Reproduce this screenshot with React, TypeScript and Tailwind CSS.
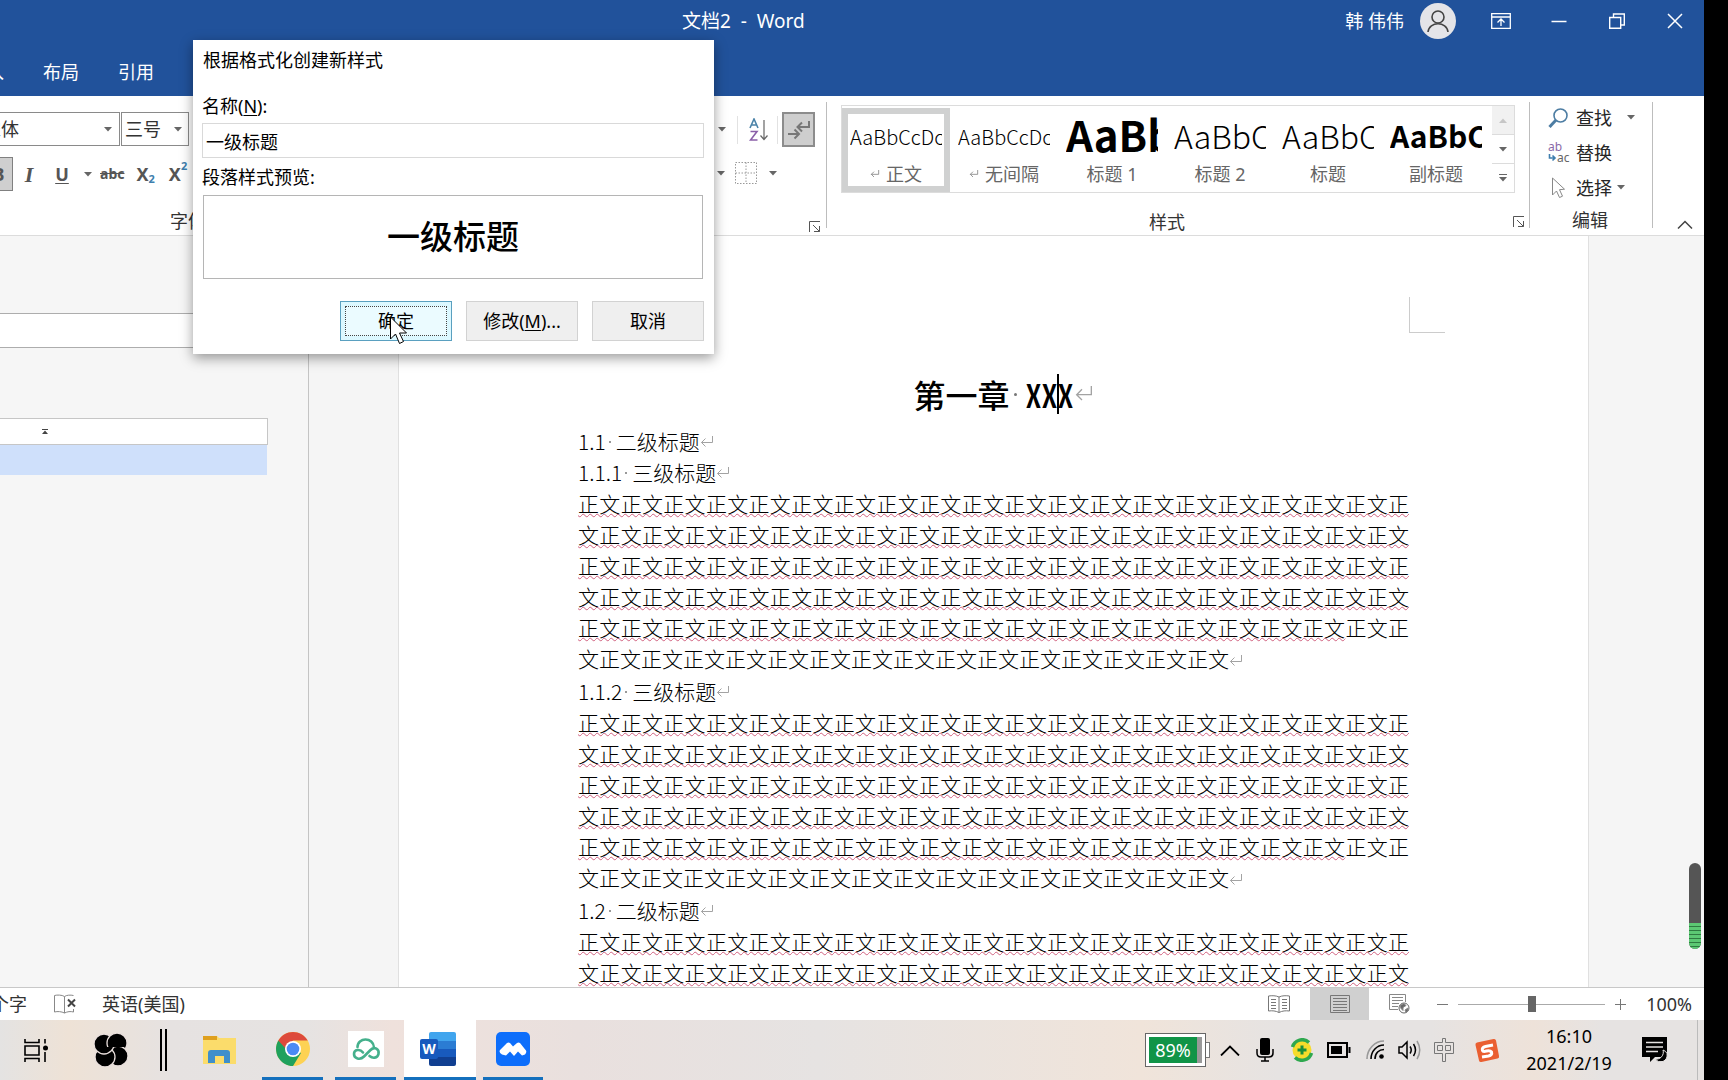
import { type ReactNode } from 'react';

type StyleItem = {
  name: string;
  sample: string;
  sampleClass: string;
  mark?: boolean;
};

const STYLE_ITEMS: StyleItem[] = [
  { name: '正文', sample: 'AaBbCcDc', sampleClass: 'pb-0.5 text-xl font-light', mark: true },
  { name: '无间隔', sample: 'AaBbCcDc', sampleClass: 'pb-0.5 text-xl font-light', mark: true },
  { name: '标题 1', sample: 'AaBb', sampleClass: 'pb-2.5 text-[42px] font-bold' },
  { name: '标题 2', sample: 'AaBbC', sampleClass: 'pb-1.5 text-[32px] font-light' },
  { name: '标题', sample: 'AaBbC', sampleClass: 'pb-1.5 text-[32px] font-light' },
  { name: '副标题', sample: 'AaBbC', sampleClass: 'pb-1.5 text-[30px] font-bold' },
];

const CHECKED_TEXT = '正文'.repeat(96);
const TAIL_TEXT = '正文'.repeat(17);

function Caret({ className = '' }: { className?: string }) {
  return (
    <svg viewBox="0 0 8 5" className={`h-[5px] w-2 shrink-0 fill-[#666] ${className}`}>
      <path d="M0 0h8L4 4.5z" />
    </svg>
  );
}

function ReturnMark({ className = 'h-3 w-3.5 stroke-[#a3a3a3]' }: { className?: string }) {
  return (
    <svg viewBox="0 0 14 12" className={`inline-block shrink-0 fill-none ${className}`}>
      <path d="M12.5 0v6.5H1.5M5.5 2.5l-4 4 4 4" />
    </svg>
  );
}

function Launcher({ label }: { label: string }) {
  return (
    <button type="button" aria-label={label}>
      <svg viewBox="0 0 12 12" className="block h-3 w-3 fill-none stroke-[#555]">
        <path d="M.5 11V.5H11M4 4l6.5 6.5M10.500 5v5.500H5" />
      </svg>
    </button>
  );
}

function WindowHeader() {
  return (
    <header className="h-24 shrink-0 overflow-hidden bg-[#21529b] text-white">
      <div className="flex h-[42px] items-center">
        <h1 className="ml-[682px] flex-1 text-[19px]">文档2&nbsp; -&nbsp; Word</h1>
        <span className="mr-4 text-lg">韩 伟伟</span>
        <svg viewBox="0 0 36 36" className="mr-[35px] h-9 w-9 fill-none stroke-[#444]" strokeWidth="1.600">
          <circle cx="18" cy="18" r="18" fill="#e4e4e8" stroke="none" />
          <circle cx="18" cy="14" r="6" />
          <path d="M8 29c1-11 19-11 20 0" />
        </svg>
        <button type="button" aria-label="功能区显示选项" className="mr-10">
          <svg viewBox="0 0 20 16" className="h-4 w-5 fill-none stroke-white" strokeWidth="1.300">
            <path d="M.7.7h18.600v14.600H.7zM.7 4h18.600M10 13V6.500M6.500 9.500L10 6l3.500 3.500" />
          </svg>
        </button>
        <button type="button" aria-label="最小化" className="mr-[42px]">
          <svg viewBox="0 0 16 16" className="h-4 w-4 stroke-white" strokeWidth="1.500">
            <path d="M.5 8.500h15" />
          </svg>
        </button>
        <button type="button" aria-label="还原" className="mr-[42px]">
          <svg viewBox="0 0 16 16" className="h-4 w-4 fill-none stroke-white" strokeWidth="1.400">
            <path d="M.7 4.500h11v10.800H.7zM4.500 4.500V1h10.800v11h-3.600" />
          </svg>
        </button>
        <button type="button" aria-label="关闭" className="mr-[21px]">
          <svg viewBox="0 0 16 16" className="h-4 w-4 stroke-white" strokeWidth="1.500">
            <path d="M1 1l14 14M15 1L1 15" />
          </svg>
        </button>
      </div>
      <nav className="-ml-8 flex h-[60px] items-center gap-[39px] text-lg">
        <button type="button">插入</button>
        <button type="button">布局</button>
        <button type="button">引用</button>
      </nav>
    </header>
  );
}

function FontGroup() {
  return (
    <section aria-label="字体" className="relative flex w-[212px] shrink-0 flex-col overflow-hidden pt-4">
      <div className="flex items-center gap-px">
        <div className="-ml-5 flex items-center border border-[#8a8a8a]">
          <select aria-label="字体" className="h-8 w-[123px] appearance-none pl-0.5 text-lg text-[#333]">
            <option>宋体</option>
          </select>
          <Caret className="mr-[7px]" />
        </div>
        <div className="flex items-center border border-[#8a8a8a]">
          <select aria-label="字号" className="h-8 w-12 appearance-none pl-[3px] text-lg text-[#333]">
            <option>三号</option>
          </select>
          <Caret className="mr-1.5 ml-1" />
        </div>
      </div>
      <div className="mt-[11px] flex h-[34px] items-center text-[#555]">
        <button type="button" className="-ml-5 h-[34px] w-[33px] border border-[#808080] bg-[#cfcfcf] pl-1 text-lg font-bold">B</button>
        <button type="button" className="ml-2 w-4 font-['Liberation_Serif',serif] text-[22px] font-bold italic">I</button>
        <button type="button" className="ml-[17px] w-4 text-lg font-bold underline underline-offset-2">U</button>
        <Caret className="ml-[14px]" />
        <button type="button" className="ml-2 text-sm font-bold line-through">abc</button>
        <button type="button" className="ml-3 flex items-center text-lg font-bold">
          X<span className="mt-2.5 text-[11px] text-[#3f7fae]">2</span>
        </button>
        <button type="button" className="ml-3.5 flex items-center text-lg font-bold">
          X<span className="mb-4 text-[11px] text-[#3f7fae]">2</span>
        </button>
      </div>
      <div className="mt-[17px] ml-[170px] w-10 text-lg leading-[26px] text-[#333]">字体</div>
    </section>
  );
}

function ParagraphGroup() {
  return (
    <section aria-label="段落" className="flex flex-1 flex-col items-end pt-4 pr-[11px]">
      <div className="flex h-[35px] items-center">
        <Caret />
        <div className="mx-[11px] h-7 w-px bg-[#e2e2e2]" />
        <button type="button" aria-label="排序">
          <svg viewBox="0 0 20 24" className="h-6 w-5 fill-none" strokeWidth="1.600">
            <path d="M1 10L5 1l4 9M2.300 7h5.400" stroke="#4b83a8" />
            <path d="M1.500 13.500h6.500l-6.500 8.500h7" stroke="#8a5fa8" />
            <path d="M15 2v19M11.500 17.500L15 21.500l3.500-4" stroke="#666" strokeWidth="1.200" />
          </svg>
        </button>
        <div className="mr-1 ml-2 h-7 w-px bg-[#e2e2e2]" />
        <button type="button" aria-label="显示编辑标记" className="flex h-[35px] w-[33px] items-center justify-center border-2 border-[#8c8c8c] bg-[#cecece]">
          <svg viewBox="0 0 22 20" className="h-5 w-[22px] fill-none stroke-[#777]" strokeWidth="2">
            <path d="M21 1v6H10M14 2.500L9.500 7l4.500 4.500M0 14h10M6.500 9.500L11 14l-4.500 4.500" />
          </svg>
        </button>
      </div>
      <div className="mt-[15px] mr-[38px] flex h-6 items-center">
        <Caret />
        <svg viewBox="0 0 22 22" className="mr-3 ml-2.5 h-[22px] w-[22px] fill-none stroke-[#999]" strokeDasharray="1.500 1.500">
          <path d="M.5.5h21v21H.5zM11 .5v21M.5 11h21" />
        </svg>
        <Caret />
      </div>
      <div className="mt-[31px] -mr-1.5">
        <Launcher label="段落设置" />
      </div>
    </section>
  );
}

function StylesGroup() {
  return (
    <section aria-label="样式" className="flex w-[702px] shrink-0 flex-col pl-[14px]">
      <div className="mt-[9px] flex h-[90px] w-[674px] border border-[#dcdcdc]">
        <div className="flex flex-1 overflow-hidden pt-0.5">
          {STYLE_ITEMS.map((item, i) => (
            <button
              key={item.name}
              type="button"
              className={`flex h-[84px] w-[108px] shrink-0 flex-col items-center border-[6px] ${i === 0 ? 'border-[#d0d1d1]' : 'border-transparent'}`}
            >
              <span className={`flex h-12 w-[92px] items-center overflow-hidden font-['Noto_Sans_CJK_SC',sans-serif] text-black ${item.sampleClass}`}>
                {item.sample}
              </span>
              <span className="flex items-center gap-1.5 text-lg leading-6 whitespace-nowrap text-[#666]">
                {item.mark && <ReturnMark className="h-2 w-2.5 stroke-[#666]" />}
                {item.name}
              </span>
            </button>
          ))}
        </div>
        <div className="flex w-[22px] flex-col">
          <button type="button" aria-label="上一行" className="flex flex-1 items-center justify-center bg-[#f1f1f1]">
            <Caret className="rotate-180 opacity-30" />
          </button>
          <button type="button" aria-label="下一行" className="flex flex-1 items-center justify-center border-y border-[#dcdcdc]">
            <Caret />
          </button>
          <button type="button" aria-label="其他" className="flex flex-1 flex-col items-center justify-center gap-0.5">
            <span className="h-px w-2 bg-[#666]" />
            <Caret />
          </button>
        </div>
      </div>
      <div className="mt-[15px] flex items-center justify-between pr-1">
        <span className="w-3" />
        <span className="pr-8 text-lg leading-7 text-[#333]">样式</span>
        <Launcher label="样式窗格" />
      </div>
    </section>
  );
}

function EditingGroup() {
  return (
    <section aria-label="编辑" className="flex w-[122px] shrink-0 flex-col pt-1 pl-[18px] text-lg text-[#262626]">
      <button type="button" className="flex h-[35px] shrink-0 items-center">
        <svg viewBox="0 0 20 20" className="mr-2 h-5 w-5 fill-none stroke-[#4d7da3]" strokeWidth="1.600">
          <circle cx="12.500" cy="7.500" r="6.500" />
          <path d="M8 12l-6.500 7" strokeWidth="3" />
        </svg>
        查找
        <Caret className="ml-[15px]" />
      </button>
      <button type="button" className="flex h-[35px] shrink-0 items-center">
        <svg viewBox="0 0 22 22" className="mr-1.5 h-[22px] w-[22px]">
          <text x="0" y="9" fontSize="12" fill="#8a6aa8">ab</text>
          <text x="9" y="20" fontSize="12" fill="#666">ac</text>
          <path d="M1.500 12v4h5M4.500 13.500L7 16l-2.500 2.500" fill="none" stroke="#3f7fae" strokeWidth="1.600" />
        </svg>
        替换
      </button>
      <button type="button" className="flex h-[35px] shrink-0 items-center">
        <svg viewBox="0 0 20 22" className="mr-2 h-[22px] w-5 fill-white stroke-[#888]">
          <path d="M4.500 1v17l4-4 3 6.500 3-1.300-3-6.500 5-.5z" />
        </svg>
        选择
        <Caret className="ml-[5px]" />
      </button>
      <div className="pl-6 leading-[30px] text-[#333]">编辑</div>
    </section>
  );
}

function Divider() {
  return <div className="mt-1.5 h-[126px] w-px shrink-0 bg-[#bdbdbd]" />;
}

function Ribbon() {
  return (
    <div className="flex h-[140px] shrink-0 border-b border-[#dcdcdc] bg-white">
      <FontGroup />
      <ParagraphGroup />
      <Divider />
      <StylesGroup />
      <Divider />
      <EditingGroup />
      <Divider />
      <div className="flex w-[51px] shrink-0 items-end justify-center pb-1.5 pl-3">
        <button type="button" aria-label="折叠功能区">
          <svg viewBox="0 0 16 9" className="h-[9px] w-4 fill-none stroke-[#444]" strokeWidth="1.500">
            <path d="M1 8.500l7-7 7 7" />
          </svg>
        </button>
      </div>
    </div>
  );
}

function NavigationPane() {
  return (
    <aside className="w-[309px] shrink-0 border-r border-[#c4c4c4] bg-[#f6f6f6] pt-[77px]">
      <input aria-label="搜索文档" className="block h-[35px] w-[267px] border-y border-[#adadad] bg-white" />
      <div className="mt-[70px] flex h-[27px] w-[268px] items-center border border-l-0 border-[#c6c6c6] bg-white pl-[42px]">
        <svg viewBox="0 0 6 6" className="h-1.5 w-1.5 fill-[#444]">
          <path d="M0 0h6v1H0zM3 1.500L6 5H0z" />
        </svg>
      </div>
      <div className="h-[30px] w-[267px] bg-[#cfe0fb]" />
    </aside>
  );
}

function NumberedHeading({ no, children }: { no: string; children: ReactNode }) {
  return (
    <h3 className="flex items-center leading-[31px]">
      <span>{no}</span>
      <span className="mr-[5px] ml-[3px] h-0.5 w-0.5 bg-[#999]" />
      {children}
      <ReturnMark />
    </h3>
  );
}

function BodyParagraph() {
  return (
    <p className="mb-0.5 text-justify leading-[31px]">
      <span className="underline decoration-[#d0617f] decoration-wavy decoration-1 underline-offset-1">{CHECKED_TEXT}</span>
      {TAIL_TEXT}
      <ReturnMark />
    </p>
  );
}

function DocumentPage() {
  return (
    <main className="flex flex-1 overflow-hidden bg-[#f5f5f5] pr-[115px] pl-[89px]">
      <article className="flex-1 border-x border-[#e0e0e0] bg-white px-[179px] pt-[61px] font-['Noto_Sans_CJK_SC',sans-serif] text-[21px] font-light text-black">
        <div className="-mr-9 ml-auto h-9 w-9 border-b border-l border-[#ccc]" />
        <h2 className="mt-[30px] mb-px flex h-[62px] items-center justify-center text-[32px] font-medium">
          第一章
          <span className="mr-[9px] ml-1 h-[3px] w-[3px] rounded-full bg-[#777]" />
          <span className="relative [font-feature-settings:'hwid']">
            XXX
            <span className="absolute top-1 right-[15px] h-10 w-0.5 bg-black" />
          </span>
          <ReturnMark className="-mr-5 h-4 w-5 stroke-[#a3a3a3]" />
        </h2>
        <NumberedHeading no="1.1">二级标题</NumberedHeading>
        <NumberedHeading no="1.1.1">三级标题</NumberedHeading>
        <BodyParagraph />
        <NumberedHeading no="1.1.2">三级标题</NumberedHeading>
        <BodyParagraph />
        <NumberedHeading no="1.2">二级标题</NumberedHeading>
        <BodyParagraph />
      </article>
    </main>
  );
}

function StatusBar() {
  return (
    <footer className="flex h-[33px] shrink-0 items-center overflow-hidden border-t border-[#c8c8c8] bg-white text-lg text-[#333]">
      <span className="-ml-[9px]">个字</span>
      <svg viewBox="0 0 22 20" className="mr-[26px] ml-[27px] h-5 w-[22px] fill-none stroke-[#888]">
        <path d="M10.500 2.500V19M10.500 2.500C8 .8 3 .8.500 1.500V18c3-.8 7-.5 10 1 3-1.500 6-1.800 9-1V15M10.500 2.500c2-1.500 6-1.700 9-1" />
        <path d="M14 5.500l7 7M21 5.500l-7 7" stroke="#444" strokeWidth="2" />
      </svg>
      <span className="flex-1">英语(美国)</span>
      <button type="button" aria-label="阅读视图" className="mr-5">
        <svg viewBox="0 0 22 18" className="h-[18px] w-[22px] fill-none stroke-[#777]">
          <path d="M11 2v15.500M11 2C8 .5 4 .5.500 1v15c4-.5 7-.2 10.500 1.500 3.500-1.700 6.500-2 10.500-1.500V1C18 .5 14 .5 11 2zM3 4.500h5M3 7.500h5M3 10.500h5M3 13.500h5M14 4.500h5M14 7.500h5M14 10.500h5M14 13.500h5" />
        </svg>
      </button>
      <button type="button" aria-label="页面视图" className="flex h-8 w-[59px] items-center justify-center bg-[#d0d0d0]">
        <svg viewBox="0 0 20 18" className="h-[18px] w-5 fill-none stroke-[#777]">
          <path d="M.5.5h19v17H.5zM3 3.500h14M3 6.500h14M3 9.500h14M3 12.500h14M3 15.500h14" />
        </svg>
      </button>
      <button type="button" aria-label="Web 版式视图" className="ml-5">
        <svg viewBox="0 0 22 20" className="h-5 w-[22px] fill-none stroke-[#888]">
          <path d="M9 15.500H.5V.5h16V8M3 3.500h11M3 6.500h11M3 9.500h7M3 12.500h6" />
          <circle cx="15" cy="14" r="5" fill="#fff" stroke="#666" />
          <path d="M11 11.500l4-2 2 2-3 2v3l-2-2zM16 16l3-2v3l-2 1.500z" fill="#666" />
        </svg>
      </button>
      <button type="button" aria-label="缩小" className="ml-[26px] h-px w-[11px] bg-[#777]" />
      <input
        type="range"
        aria-label="显示比例"
        defaultValue={50}
        className="mx-2.5 h-4 w-[147px] appearance-none bg-[linear-gradient(#aaa,#aaa)] bg-[length:100%_1px] bg-center bg-no-repeat [&::-webkit-slider-thumb]:h-4 [&::-webkit-slider-thumb]:w-2 [&::-webkit-slider-thumb]:appearance-none [&::-webkit-slider-thumb]:bg-[#666]"
      />
      <button type="button" aria-label="放大">
        <svg viewBox="0 0 11 11" className="h-[11px] w-[11px] stroke-[#777]">
          <path d="M0 5.500h11M5.500 0v11" />
        </svg>
      </button>
      <button type="button" className="mr-3 ml-5">100%</button>
    </footer>
  );
}

function TaskbarApps() {
  return (
    <div className="flex h-full items-center">
      <button type="button" aria-label="任务视图" className="ml-6">
        <svg viewBox="0 0 24 24" className="h-6 w-6 fill-none stroke-black" strokeWidth="1.600">
          <path d="M1 1v3.500h14V1M1 8h14v9H1zM1 24v-3.500h14V24M21 1v4.500M21 14v10" />
          <circle cx="21.500" cy="10" r="2.500" fill="#000" stroke="none" />
        </svg>
      </button>
      <button type="button" aria-label="应用" className="ml-[46px]">
        <svg viewBox="0 0 34 34" className="h-[34px] w-[34px] stroke-[#e8dedb]" strokeWidth="1.300">
          <clipPath id="petal-top">
            <path d="M0 0h34v14H0z" />
          </clipPath>
          <circle cx="23" cy="10" r="10" />
          <circle cx="24" cy="23" r="10" />
          <circle cx="11" cy="24" r="10" />
          <circle cx="10" cy="11" r="10" />
          <circle cx="23" cy="10" r="10" clipPath="url(#petal-top)" />
        </svg>
      </button>
      <div className="ml-8 h-[42px] w-[7px] border-x-2 border-black" />
      <button type="button" aria-label="文件资源管理器" className="ml-9">
        <svg viewBox="0 0 34 30" className="h-[30px] w-[34px]">
          <path d="M0 1h14l2 2h17v26H0z" fill="#fbdc6b" />
          <path d="M0 1h14v4H0z" fill="#dfa01e" />
          <path d="M5 28V18q0-3 3-3h16q3 0 3 3v10h-6v-7h-9v7z" fill="#3f8fcb" />
        </svg>
      </button>
      <button type="button" aria-label="Chrome" className="ml-[25px] flex h-full w-[61px] items-center justify-center border-b-[3px] border-[#1470bd]">
        <svg viewBox="0 0 34 34" className="h-[34px] w-[34px]">
          <circle cx="17" cy="17" r="17" fill="#fdd253" />
          <path d="M17 17L2.300 8.500A17 17 0 0 0 17 34l8-13z" fill="#1fa15d" />
          <path d="M2.300 8.500A17 17 0 0 1 31.700 8.500H17L10 17z" fill="#dd4a3c" />
          <circle cx="17" cy="17" r="8" fill="#fff" />
          <circle cx="17" cy="17" r="6.300" fill="#4a8af4" />
        </svg>
      </button>
      <button type="button" aria-label="云盘" className="ml-3 flex h-full w-[61px] items-center justify-center border-b-[3px] border-[#1470bd]">
        <svg viewBox="0 0 36 36" className="h-9 w-9 fill-none stroke-[#45b08c]" strokeWidth="2.600">
          <path d="M0 0h36v36H0z" fill="#fff" stroke="none" />
          <path d="M9.500 16C9.500 6 25.500 6 26 16.500M15 21.500c-3-4-9-3-9 1.500s6 6.500 10 2.500l6.500-6.500c4-4 9-1 8 4-1 4.500-6 4.500-9 2" strokeLinecap="round" />
        </svg>
      </button>
      <button type="button" aria-label="Word" className="ml-2 flex h-full w-[72px] items-center justify-center border-b-[3px] border-[#1470bd] bg-white pr-1">
        <svg viewBox="0 0 36 34" className="h-[34px] w-9">
          <path d="M9 2q0-2 2-2h23q2 0 2 2v7H9z" fill="#41a5ee" />
          <path d="M9 9h27v8H9z" fill="#2b7cd3" />
          <path d="M9 17h27v8H9z" fill="#185abd" />
          <path d="M9 25h27v7q0 2-2 2H11q-2 0-2-2z" fill="#103f91" />
          <rect y="7" width="18" height="20" rx="2" fill="#185abd" />
          <text x="9" y="22" fontSize="14" fontWeight="700" fill="#fff" textAnchor="middle">W</text>
        </svg>
      </button>
      <button type="button" aria-label="腾讯会议" className="ml-[7px] flex h-full w-[60px] items-center justify-center border-b-[3px] border-[#1470bd]">
        <svg viewBox="0 0 34 34" className="h-[34px] w-[34px]">
          <rect width="34" height="34" rx="5" fill="#0d6efb" />
          <path d="M4 18l7-7q1.500-1 3 0l3 3.500 4-3.500q1.500-1 3 0l6 7.500q1 2-1 4l-3 1-4-4-4 4.500-4-4.500-4 4-4-1q-3.500-2-2-4.500z" fill="#fff" />
        </svg>
      </button>
    </div>
  );
}

function Tray() {
  return (
    <div className="flex h-full items-center text-black">
      <div className="flex items-center">
        <div className="flex h-[34px] w-[61px] border border-[#666] bg-white p-[3px]">
          <span className="w-12 bg-[#109447] text-center text-lg leading-[26px] text-white">89%</span>
          <span className="flex-1 bg-[#999]" />
        </div>
        <span className="h-4 w-1 border border-l-0 border-[#777] bg-white" />
      </div>
      <svg viewBox="0 0 20 11" className="ml-2.5 h-[11px] w-5 fill-none stroke-black" strokeWidth="1.800">
        <path d="M1 10.500l9-9 9 9" />
      </svg>
      <svg viewBox="0 0 18 24" className="ml-4 h-6 w-[18px] fill-none stroke-black" strokeWidth="1.500">
        <rect x="4" y="0" width="10" height="17" rx="2" fill="#000" stroke="none" />
        <path d="M1 11v4q0 4 4 4h8q4 0 4-4v-4M9 19v4M5 23h8" />
      </svg>
      <svg viewBox="0 0 24 24" className="ml-4 h-6 w-6 fill-none">
        <circle cx="12" cy="12" r="9.500" fill="#f7dc2b" />
        <path d="M2.500 9A10 10 0 0 1 19 4.500M21.500 15A10 10 0 0 1 5 19.500" stroke="#2fa84f" strokeWidth="3.500" />
        <path d="M12 7.500v9M7.500 12h9" stroke="#1c8f3b" strokeWidth="3" />
      </svg>
      <svg viewBox="0 0 24 16" className="ml-[13px] h-4 w-6 fill-none stroke-black" strokeWidth="2">
        <path d="M1 1h19v14H1zM22.500 5v6" />
        <path d="M4 4h11v8H4z" fill="#000" stroke="none" />
      </svg>
      <svg viewBox="0 0 20 20" className="ml-[15px] h-5 w-5 fill-none stroke-black" strokeWidth="1.600">
        <path d="M1 19C1 9 9 1 18 1" stroke="#999" />
        <path d="M5 19C5 11 11 5 18 5M9 19c0-6 4-9.500 9-9.500" />
        <circle cx="15.500" cy="16.500" r="2.300" fill="#000" stroke="none" />
      </svg>
      <svg viewBox="0 0 24 22" className="ml-3 h-[22px] w-6 fill-none stroke-black" strokeWidth="1.500">
        <path d="M1 8v6h3l5 5V3L4 8zM12 7.500q2.500 3.500 0 7M15.500 5q4 6 0 12" />
        <path d="M19 2q5.500 9 0 18" stroke="#999" />
      </svg>
      <svg viewBox="0 0 20 24" className="ml-3 h-6 w-5 fill-none stroke-[#777]">
        <path d="M8.500.5h3v4h8v11h-8v8h-3v-8h-8v-11h8zM3.500 7.500h5v5h-5zM11.500 7.500h5v5h-5z" />
      </svg>
      <svg viewBox="0 0 26 26" className="ml-5 h-[26px] w-[26px]">
        <path d="M3 5.500L19.500 2q2-.5 2.500 1.500l3 15.500q.5 2-1.500 2.500L7.500 25q-2 .5-2.500-1.500L1.500 8q-.5-2 1.500-2.500z" fill="#ea5f31" />
        <path d="M19 8l-7.500 1.500q-4 1-3 4 .5 1.500 4 .5t5 1q1 3-3 4L8 20" fill="none" stroke="#fff" strokeWidth="3" />
      </svg>
      <div className="ml-[25px] w-[88px] text-center text-lg leading-[27px] whitespace-nowrap">
        <div>16:10</div>
        <div>2021/2/19</div>
      </div>
      <svg viewBox="0 0 26 26" className="mr-[29px] ml-[29px] h-[26px] w-[26px]">
        <path d="M0 0h25v20H13l-5 5v-5H0z" />
        <path d="M4 5.500h17M4 10h17M4 14.500h12" stroke="#e6e3e2" strokeWidth="1.600" />
        <path d="M21 13a7 7 0 0 1-8 9q3 4 8 2.500 5-2.500 4-8-1-2.500-4-3.500z" stroke="#e6e3e2" />
      </svg>
      <div className="mr-1.5 h-full w-px bg-[#bbb]" />
    </div>
  );
}

function Taskbar() {
  return (
    <div className="flex h-[60px] shrink-0 justify-between bg-[linear-gradient(90deg,#e4e3e2_0,#eee2d6_4%,#e6e2e1_10%,#e6e3e2_18%,#efe1dc_23%,#e9e0de_34%,#e6e3e2_48%,#f0e4da_67%,#e6e3e2_75%,#e6e3e2_84%,#eee2d9_90%,#e6e3e2_94%)]">
      <TaskbarApps />
      <Tray />
    </div>
  );
}

function NewStyleDialog() {
  return (
    <div
      role="dialog"
      aria-labelledby="dialog-title"
      className="absolute top-10 left-[193px] w-[521px] bg-white py-1.5 pr-2.5 pl-[9px] text-lg text-black shadow-[0_4px_12px_rgba(0,0,0,0.4)]"
    >
      <h2 id="dialog-title" className="pl-px leading-7">根据格式化创建新样式</h2>
      <label htmlFor="style-name" className="mt-[17px] block leading-[30px]">
        名称(<u className="underline-offset-2">N</u>):
      </label>
      <input id="style-name" defaultValue="一级标题" className="mt-0.5 block h-[35px] w-full border border-[#d9d9d9] px-[3px]" />
      <p className="mt-[5px] mb-1 leading-7">段落样式预览:</p>
      <div className="mx-px flex h-[84px] items-center justify-center border border-[#b5b5b5] pb-0.5 font-['Noto_Sans_CJK_SC',sans-serif] text-[33px] font-medium">
        一级标题
      </div>
      <div className="mt-[22px] mb-[7px] flex justify-end gap-[14px]">
        <button type="button" className="relative h-10 w-28 border border-[#5aa0c0] bg-[#dcf8ff] p-1">
          <span className="flex h-full items-center justify-center border border-dotted border-[#444] bg-[#ebfbff]">确定</span>
          <svg viewBox="0 0 20 30" className="absolute top-3.5 left-12 h-[30px] w-5 fill-white stroke-black">
            <path d="M1.500 1v22l5-5 4 9.500 4-2-4-8.500h7z" />
          </svg>
        </button>
        <button type="button" className="h-10 w-28 border border-[#d2d2d2] bg-[#efefef]">
          修改(<u className="underline-offset-2">M</u>)...
        </button>
        <button type="button" className="h-10 w-28 border border-[#d2d2d2] bg-[#efefef]">取消</button>
      </div>
    </div>
  );
}

export default function App() {
  return (
    <div className="h-screen overflow-hidden bg-black pr-6 font-['Noto_Sans','Noto_Sans_CJK_SC',sans-serif]">
      <div className="relative flex h-full flex-col">
        <WindowHeader />
        <Ribbon />
        <div className="flex min-h-0 flex-1">
          <NavigationPane />
          <DocumentPage />
        </div>
        <StatusBar />
        <Taskbar />
        <NewStyleDialog />
        <div className="absolute right-[3px] bottom-[131px] flex h-[86px] w-3 flex-col justify-end overflow-hidden rounded-full bg-[#555]">
          <div className="h-[26px] bg-[repeating-linear-gradient(#5cc873_0_3px,#2f7a41_3px_4px)]" />
        </div>
      </div>
    </div>
  );
}
